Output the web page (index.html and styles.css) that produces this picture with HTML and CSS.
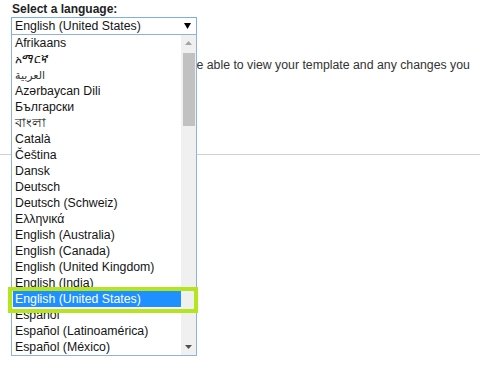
FILE: index.html
```html
<!DOCTYPE html>
<html lang="en">
  <head>
    <meta charset="UTF-8" />
    <meta name="viewport" content="width=device-width, initial-scale=1.0" />
    <title>Template Settings</title>
    <link rel="stylesheet" href="styles.css">
  </head>
  <body>
    <div class="page">
      <div class="lang-picker">
        <div class="lang-label">Select a language:</div>
        <div class="lang-select">
          <span class="lang-current">English (United States)</span>
          <svg class="lang-arrow" width="7" height="6" viewBox="0 0 7 6">
            <polygon points="0,0 7,0 3.5,6" fill="#000" />
          </svg>
        </div>

        <div class="lang-menu">
          <ul class="lang-list">
            <li>Afrikaans</li>
            <li>አማርኛ</li>
            <li class="rtl-item">العربية</li>
            <li>Azərbaycan Dili</li>
            <li>Български</li>
            <li class="bn-item">বাংলা</li>
            <li>Català</li>
            <li>Čeština</li>
            <li>Dansk</li>
            <li>Deutsch</li>
            <li>Deutsch (Schweiz)</li>
            <li>Ελληνικά</li>
            <li>English (Australia)</li>
            <li>English (Canada)</li>
            <li>English (United Kingdom)</li>
            <li>English (India)</li>
            <li class="selected">English (United States)</li>
            <li>Español</li>
            <li>Español (Latinoamérica)</li>
            <li>Español (México)</li>
          </ul>
          <div class="scrollbar">
            <svg class="scroll-btn" width="7" height="4" viewBox="0 0 7 4">
              <polygon points="0,4 7,4 3.5,0" fill="#a3a3a3" />
            </svg>
            <div class="scroll-track">
              <div class="scroll-thumb"></div>
            </div>
            <svg class="scroll-btn" width="7" height="4" viewBox="0 0 7 4">
              <polygon points="0,0 7,0 3.5,4" fill="#505050" />
            </svg>
          </div>
        </div>
      </div>

      <p class="share-note">
        You will be able to view your template and any changes you make.
      </p>

      <div class="divider"></div>

      <!-- highlight drawn over the current choice -->
      <div class="callout"></div>
    </div>
  </body>
</html>
```

FILE: styles.css
```css
body {
  margin: 0;
  padding: 0;
  background-color: white;
  font-family: "Liberation Sans", "DejaVu Sans", "Noto Sans", sans-serif;
  color: #141414;
}
.page {
  position: relative;
  width: 480px;
  height: 377px;
  overflow: hidden;
}
.lang-picker {
  position: relative;
}
.lang-label {
  padding: 2px 0 0 12px;
  height: 15px;
  line-height: 15px;
  font-size: 12px;
  font-weight: bold;
  color: #222;
}
.lang-select {
  margin-left: 11px;
  width: 186px;
  height: 18px;
  box-sizing: border-box;
  border: 1px solid #7eaee6;
  background-color: white;
  display: flex;
  align-items: center;
  justify-content: space-between;
  padding: 0 5px 0 3px;
}
.lang-current {
  font-size: 12.3px;
  line-height: 16px;
}
.lang-arrow {
  display: block;
}
.lang-menu {
  position: absolute;
  top: 34px;
  left: 11px;
  width: 186px;
  box-sizing: border-box;
  border: 1px solid #8fb2e2;
  background-color: white;
  display: flex;
  z-index: 2;
}
.lang-list {
  list-style: none;
  margin: 0 0 0 1px;
  padding: 0;
  width: 168px;
}
.lang-list li {
  height: 16px;
  line-height: 16px;
  padding-left: 2px;
  font-size: 12.3px;
  white-space: nowrap;
  overflow: hidden;
}
.lang-list .rtl-item {
  font-size: 11px;
  color: #333;
}
.lang-list .bn-item {
  font-size: 13px;
}
.lang-list .selected {
  background-color: #1e90ff;
  color: white;
}
.scrollbar {
  width: 15px;
  background-color: #f0f0f0;
  display: flex;
  flex-direction: column;
  align-items: center;
}
.scroll-btn {
  display: block;
  margin: 6px 0;
}
.scroll-track {
  flex: 1;
  width: 100%;
  padding-top: 2px;
}
.scroll-thumb {
  margin: 0 auto;
  width: 12px;
  height: 73px;
  background-color: #c1c1c1;
}
.share-note {
  margin: 22px 0 0 145px;
  font-size: 12.3px;
  line-height: 16px;
  color: #333;
}
.divider {
  margin-top: 65px;
  border-top: 1px solid #d0d0d0;
}
.callout {
  position: absolute;
  left: 8px;
  top: 287px;
  width: 190px;
  height: 26px;
  box-sizing: border-box;
  border: 4px solid #b5e61d;
  z-index: 3;
}
```
